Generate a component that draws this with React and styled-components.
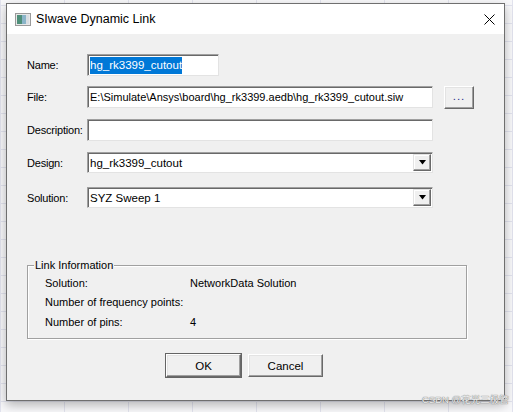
import React from "react";
import styled, { createGlobalStyle } from "styled-components";

const GlobalStyle = createGlobalStyle`
  html, body {
    margin: 0;
    padding: 0;
    background: #f7f7f9;
  }
  * {
    box-sizing: border-box;
  }
`;

const Page = styled.div`
  position: relative;
  width: 513px;
  height: 412px;
  overflow: hidden;
  padding: 3px 0 0 6px;
  background-color: #f8f8fa;
  background-image: linear-gradient(#e2e3ee 1px, transparent 1px),
    linear-gradient(90deg, #e2e3ee 1px, transparent 1px);
  background-size: 64px 18px;
  background-position: 0 5px;
  font-family: "Liberation Sans", Arial, sans-serif;
  font-size: 11px;
  color: #000;
`;

const Window = styled.div`
  width: 499px;
  height: 398px;
  border: 1px solid #6f6f6f;
  display: flex;
  flex-direction: column;
  background: #f0f0f0;
  box-shadow: 0 4px 10px rgba(0, 0, 0, 0.28);
`;

const TitleBar = styled.div`
  height: 30px;
  background: #fff;
  display: flex;
  align-items: center;
  padding-left: 8px;
  flex-shrink: 0;
`;

const TitleText = styled.span`
  margin-left: 5px;
  font-size: 12.5px;
  color: #000;
`;

const CloseIcon = styled.svg`
  margin-left: auto;
  margin-right: 9px;
`;

const Body = styled.div`
  flex: 1;
  padding: 20px 0 0 20px;
  display: flex;
  flex-direction: column;
`;

const FormRow = styled.div`
  display: flex;
  align-items: center;
  height: ${({ h }) => h || 22}px;
  margin-top: ${({ gap }) => gap || 0}px;
`;

const Label = styled.div`
  width: 60px;
  flex-shrink: 0;
  letter-spacing: -0.2px;
`;

const TextBox = styled.div`
  width: ${({ w }) => w}px;
  height: 100%;
  background: #fff;
  border-top: 1px solid #a0a0a0;
  border-left: 1px solid #a0a0a0;
  border-right: 1px solid #e3e3e3;
  border-bottom: 1px solid #e3e3e3;
  box-shadow: inset 1px 1px 0 #696969;
  display: flex;
  align-items: center;
  padding-left: 2px;
  white-space: nowrap;
  overflow: hidden;
  font-size: ${({ fs }) => fs || 11.5}px;
`;

const Selected = styled.span`
  background: #0078d7;
  color: #fff;
  padding: 2px 0 3px;
`;

const RaisedButton = styled.button`
  width: ${({ w }) => w}px;
  height: ${({ h }) => h}px;
  margin-left: ${({ ml }) => ml || 0}px;
  padding: 0;
  background: #f0f0f0;
  font-family: "Liberation Sans", Arial, sans-serif;
  font-size: 11.5px;
  color: #000;
  border-top: 1px solid #fff;
  border-left: 1px solid #fff;
  border-right: 1px solid #696969;
  border-bottom: 1px solid #696969;
  box-shadow: ${({ isDefault }) =>
    isDefault
      ? "0 0 0 1px #646464, inset -1px -1px 0 #a0a0a0, inset 1px 1px 0 #e3e3e3"
      : "inset -1px -1px 0 #a0a0a0, inset 1px 1px 0 #e3e3e3"};
  display: flex;
  align-items: center;
  justify-content: center;
`;

const Dots = styled.span`
  color: #2c2c8c;
  letter-spacing: 1px;
  margin-top: -2px;
`;

const ComboBox = styled(TextBox)`
  justify-content: space-between;
  padding-right: 1px;
`;

const ArrowButton = styled.div`
  width: 18px;
  height: 17px;
  background: #f0f0f0;
  border-top: 1px solid #e3e3e3;
  border-left: 1px solid #e3e3e3;
  border-right: 1px solid #696969;
  border-bottom: 1px solid #696969;
  box-shadow: inset -1px -1px 0 #a0a0a0, inset 1px 1px 0 #fff;
  display: flex;
  align-items: center;
  justify-content: center;
  flex-shrink: 0;
`;

const GroupBox = styled.div`
  position: relative;
  width: 440px;
  height: 74px;
  margin-top: 57px;
  border: 1px solid #a0a0a0;
  box-shadow: 1px 1px 0 #fff, inset 1px 1px 0 #fff;
  padding: 7px 0 0 17px;
`;

const Legend = styled.span`
  position: absolute;
  top: -7px;
  left: 6px;
  padding: 0 1px;
  background: #f0f0f0;
  line-height: 13px;
`;

const InfoRow = styled.div`
  display: flex;
  height: 19.5px;
  align-items: center;
`;

const InfoLabel = styled.div`
  width: 145px;
`;

const ButtonRow = styled.div`
  display: flex;
  gap: 7px;
  margin-top: 15px;
  padding-left: 139px;
`;

const Watermark = styled.div`
  position: absolute;
  left: 422px;
  top: 394px;
  white-space: nowrap;
  line-height: 11px;
  font-family: "Liberation Sans", "Noto Sans CJK SC", sans-serif;
  font-size: 9.5px;
  color: #eee;
  text-shadow: 0 0 1px #777, 0 0 1px #777;
`;

const AppIcon = () => (
  <svg width="16" height="13" viewBox="0 0 16 13">
    <rect x="0.5" y="0.5" width="15" height="12" fill="#e8e8e8" stroke="#9a9a9a" />
    <rect x="2" y="2" width="5" height="9" fill="#4f8f7a" />
    <rect x="7" y="2" width="4" height="9" fill="#8ab4c8" />
    <rect x="11" y="2" width="3" height="9" fill="#d8dde2" />
  </svg>
);

const DownArrow = () => (
  <svg width="7" height="5" viewBox="0 0 7 5">
    <path d="M0 0 H7 L3.5 4.5 Z" fill="#000" />
  </svg>
);

const infoRows = [
  { label: "Solution:", value: "NetworkData Solution" },
  { label: "Number of frequency points:", value: "" },
  { label: "Number of pins:", value: "4" },
];

const App = () => {
  return (
    <Page>
      <GlobalStyle />
      <Window>
        <TitleBar>
          <AppIcon />
          <TitleText>SIwave Dynamic Link</TitleText>
          <CloseIcon width="11" height="11" viewBox="0 0 11 11">
            <path d="M0.5 0.5 L10.5 10.5 M10.5 0.5 L0.5 10.5" stroke="#000" strokeWidth="1" />
          </CloseIcon>
        </TitleBar>
        <Body>
          <FormRow>
            <Label>Name:</Label>
            <TextBox w={132}>
              <Selected>hg_rk3399_cutout</Selected>
            </TextBox>
          </FormRow>
          <FormRow gap={10}>
            <Label>File:</Label>
            <TextBox w={346} fs={11}>
              E:\Simulate\Ansys\board\hg_rk3399.aedb\hg_rk3399_cutout.siw
            </TextBox>
            <RaisedButton w={30} h={23} ml={11}>
              <Dots>...</Dots>
            </RaisedButton>
          </FormRow>
          <FormRow gap={11}>
            <Label>Description:</Label>
            <TextBox w={346} />
          </FormRow>
          <FormRow gap={11} h={21}>
            <Label>Design:</Label>
            <ComboBox w={346}>
              <span>hg_rk3399_cutout</span>
              <ArrowButton>
                <DownArrow />
              </ArrowButton>
            </ComboBox>
          </FormRow>
          <FormRow gap={14} h={21}>
            <Label>Solution:</Label>
            <ComboBox w={346}>
              <span>SYZ Sweep 1</span>
              <ArrowButton>
                <DownArrow />
              </ArrowButton>
            </ComboBox>
          </FormRow>
          <GroupBox>
            <Legend>Link Information</Legend>
            {infoRows.map((row) => (
              <InfoRow key={row.label}>
                <InfoLabel>{row.label}</InfoLabel>
                <span>{row.value}</span>
              </InfoRow>
            ))}
          </GroupBox>
          <ButtonRow>
            <RaisedButton w={75} h={23} isDefault>
              OK
            </RaisedButton>
            <RaisedButton w={75} h={23}>
              Cancel
            </RaisedButton>
          </ButtonRow>
        </Body>
      </Window>
      <Watermark>CSDN @花光三极管</Watermark>
    </Page>
  );
};

export default App;
